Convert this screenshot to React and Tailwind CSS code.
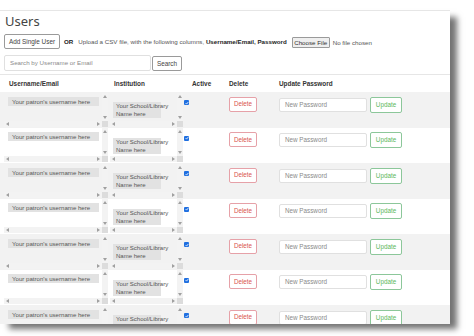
import React from "react";

function Up() {
  return (
    <svg width="4" height="3" viewBox="0 0 4 3"><path d="M0 3L2 0L4 3Z" fill="#a0a0a0" /></svg>
  );
}
function Down() {
  return (
    <svg width="4" height="3" viewBox="0 0 4 3"><path d="M0 0L2 3L4 0Z" fill="#a0a0a0" /></svg>
  );
}
function Left() {
  return (
    <svg width="3" height="4" viewBox="0 0 3 4"><path d="M3 0L0 2L3 4Z" fill="#a0a0a0" /></svg>
  );
}
function Right() {
  return (
    <svg width="3" height="4" viewBox="0 0 3 4"><path d="M0 0L3 2L0 4Z" fill="#a0a0a0" /></svg>
  );
}

function ScrollBox({ w, children }) {
  return (
    <div className={`grid grid-cols-[1fr_6px] grid-rows-[28px_6px] h-[34px] shrink-0 ${w}`}>
      <div className="overflow-hidden text-[6px] leading-[9px]">{children}</div>
      <div className="bg-[#f3f3f3] flex flex-col items-center justify-between py-[2px]">
        <Up />
        <Down />
      </div>
      <div className="bg-[#f3f3f3] flex items-center justify-between px-[2px]">
        <Left />
        <Right />
      </div>
      <div className="bg-[#dcdcdc]" />
    </div>
  );
}

function Check() {
  return (
    <div className="w-[5px] h-[5px] rounded-[1px] bg-[#1f6fe0] flex items-center justify-center shrink-0">
      <svg width="4" height="4" viewBox="0 0 4 4">
        <path d="M0.6 2.1L1.6 3.1L3.4 0.9" stroke="white" strokeWidth="0.8" fill="none" />
      </svg>
    </div>
  );
}

function Row({ striped }) {
  return (
    <div className={`flex items-start h-[35.5px] shrink-0 ${striped ? "bg-[#f2f2f2]" : "bg-white"}`}>
      <div className="ml-[4px] mt-[0.5px]">
        <ScrollBox w="w-[104px]">
          <div className="pt-[4px] pl-[4px]">
            <div className="w-fit bg-[#e2e2e2] pl-[4px] pr-[9px] text-[6.1px] leading-[9px] text-[#555] whitespace-nowrap">
              Your patron's username here
            </div>
          </div>
        </ScrollBox>
      </div>
      <div className="ml-[2px] mt-[0.5px]">
        <ScrollBox w="w-[73px]">
          <div className="pt-[9.5px] pl-[3px]">
            <div className="w-[48px] bg-[#e2e2e2] pl-[3px] text-[6px] leading-[8px] text-[#555] whitespace-nowrap">
              <div>Your School/Library</div>
              <div>Name here</div>
            </div>
          </div>
        </ScrollBox>
      </div>
      <div className="ml-[1px] mt-[8px]">
        <Check />
      </div>
      <button className="ml-[40px] mt-[4.5px] w-[28px] h-[15px] border border-[#e6a1a8] rounded-[2px] text-[6.3px] leading-[8px] text-[#d9534f] bg-white flex items-center justify-center">
        Delete
      </button>
      <div className="ml-[22px] mt-[5.5px] w-[88px] h-[14px] border border-[#e0e0e0] rounded-[2px] bg-white flex items-center pl-[5px] text-[6.3px] leading-[8px] text-[#8a8a8a]">
        New Password
      </div>
      <button className="ml-[3px] mt-[4.5px] w-[32px] h-[16px] border border-[#8cc79a] rounded-[2px] text-[6.3px] leading-[8px] text-[#5cb85c] bg-white flex items-center justify-center">
        Update
      </button>
    </div>
  );
}

export default function App() {
  const rows = [0, 1, 2, 3, 4, 5, 6];
  return (
    <div className="w-[474px] h-[336px] bg-white overflow-hidden font-['Liberation_Sans',Arial,sans-serif] text-[#555]">
      <div className="mt-[10px] w-[450px] h-[314px] bg-white border-t border-[#e6e6e6] overflow-hidden shadow-[8px_6px_6px_-1px_rgba(0,0,0,0.55)] flex flex-col">
        <div className="ml-[5px] mt-[3px] text-[13px] leading-[14px] text-[#444] shrink-0 font-['Noto_Sans',sans-serif]">Users</div>
        <div className="mt-[6px] flex items-center h-[15px] shrink-0 text-[6.2px] leading-[8px]">
          <button className="ml-[4px] w-[56px] h-[15px] border border-[#9a9a9a] rounded-[2px] text-[6.4px] text-[#444] bg-white flex items-center justify-center">
            Add Single User
          </button>
          <span className="ml-[4px] font-bold text-[#222]">OR</span>
          <span className="ml-[5px] text-[#555] whitespace-nowrap">
            Upload a CSV file, with the following columns,{" "}
            <b className="text-[#222]">Username/Email, Password</b>
          </span>
          <div className="ml-[5px] mt-[2px] w-[38px] h-[11px] border border-[#9a9a9a] rounded-[1px] bg-[#efefef] text-[#333] flex items-center justify-center">
            Choose File
          </div>
          <span className="ml-[3px] mt-[2px] text-[#555] whitespace-nowrap">No file chosen</span>
        </div>
        <div className="mt-[6px] flex items-start h-[16px] shrink-0 text-[6.2px] leading-[8px]">
          <div className="ml-[4px] w-[147px] h-[16px] border border-[#e0e0e0] rounded-[2px] flex items-center pl-[5px] text-[#8a8a8a]">
            Search by Username or Email
          </div>
          <button className="ml-[1px] mt-[1px] w-[30px] h-[15px] border border-[#9a9a9a] rounded-[2px] text-[6.4px] text-[#444] bg-white flex items-center justify-center">
            Search
          </button>
        </div>
        <div className="mt-[3px] border-t border-[#e6e6e6] h-[18px] flex items-center text-[6.4px] leading-[8px] font-bold text-[#333] shrink-0">
          <div className="pl-[9px] w-[114px]">Username/Email</div>
          <div className="w-[78px]">Institution</div>
          <div className="w-[37px]">Active</div>
          <div className="w-[50px]">Delete</div>
          <div>Update Password</div>
        </div>
        {rows.map((i) => (
          <Row key={i} striped={i % 2 === 0} />
        ))}
      </div>
    </div>
  );
}
